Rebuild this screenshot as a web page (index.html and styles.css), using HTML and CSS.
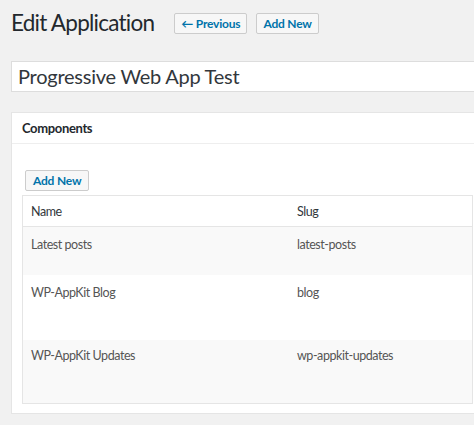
FILE: index.html
```html
<!DOCTYPE html>
<html>
<head>
<meta charset="utf-8">
<link rel="stylesheet" href="styles.css">
</head>
<body>
<div class="wrap">
  <div class="title-row">
    <h1 class="title">Edit Application</h1>
    <a class="btn btn-top">← Previous</a>
    <a class="btn btn-top">Add New</a>
  </div>
  <div class="title-input">Progressive Web App Test</div>
  <div class="panel">
    <div class="panel-head">Components</div>
    <div class="panel-body">
      <a class="btn btn-inner">Add New</a>
      <table class="list">
        <thead>
          <tr><th class="col-name">Name</th><th>Slug</th></tr>
        </thead>
        <tbody>
          <tr class="alt r1"><td>Latest posts</td><td>latest-posts</td></tr>
          <tr class="r2"><td>WP-AppKit Blog</td><td>blog</td></tr>
          <tr class="alt r3"><td>WP-AppKit Updates</td><td>wp-appkit-updates</td></tr>
        </tbody>
      </table>
    </div>
  </div>
</div>
</body>
</html>
```

FILE: styles.css
```css
html, body {
  margin: 0;
  padding: 0;
  background: #f1f1f1;
  overflow: hidden;
}
body {
  font-family: Lato, "Open Sans", sans-serif;
  color: #555;
  font-size: 13px;
}
.wrap {
  padding: 0 0 0 11px;
  width: 480px;
}
.title-row {
  display: flex;
  align-items: center;
  height: 46px;
}
.title {
  margin: 0 20px 0 0;
  font-weight: 400;
  font-size: 22.5px;
  letter-spacing: -0.75px;
  color: #23282d;
  line-height: 1;
}
.btn {
  display: inline-flex;
  align-items: center;
  box-sizing: border-box;
  border: 1px solid #ccc;
  background: #f7f7f7;
  border-radius: 2px;
  color: #0073aa;
  font-weight: 700;
  font-size: 12px;
  letter-spacing: -0.2px;
  text-decoration: none;
}
.btn-top {
  height: 21px;
  padding: 0 6px;
  margin-right: 9px;
}
.title-input {
  margin-top: 15px;
  box-sizing: border-box;
  height: 31px;
  border: 1px solid #ddd;
  border-right: none;
  background: #fff;
  font-size: 20px;
  letter-spacing: -0.25px;
  color: #32373c;
  padding-left: 6px;
  line-height: 28px;
}
.panel {
  margin-top: 20px;
  background: #fff;
  border: 1px solid #e5e5e5;
  border-right: none;
  height: 302px;
  box-sizing: border-box;
}
.panel-head {
  height: 31px;
  box-sizing: border-box;
  border-bottom: 1px solid #eee;
  font-weight: 700;
  font-size: 13px;
  letter-spacing: -0.35px;
  color: #23282d;
  padding: 7px 0 0 10px;
}
.panel-body {
  padding: 26px 0 0 10px;
}
.btn-inner {
  height: 21px;
  padding: 0 7px;
  margin-left: 3px;
}
.list {
  margin-top: 4px;
  width: 451px;
  border-collapse: collapse;
  border: 1px solid #e5e5e5;
  table-layout: fixed;
}
.list th, .list td {
  text-align: left;
  font-weight: 400;
  font-size: 12.5px;
  letter-spacing: -0.45px;
  padding: 0 0 0 8px;
  vertical-align: top;
}
.list th {
  height: 30px;
  vertical-align: middle;
  border-bottom: 1px solid #e5e5e5;
  color: #32373c;
}
.col-name { width: 258px; }
.list td { padding-top: 10px; }
.alt td { background: #f9f9f9; }
.r1 td { height: 38px; }
.r2 td { height: 55px; }
.r3 td { height: 55px; padding-top: 8px; }
```
